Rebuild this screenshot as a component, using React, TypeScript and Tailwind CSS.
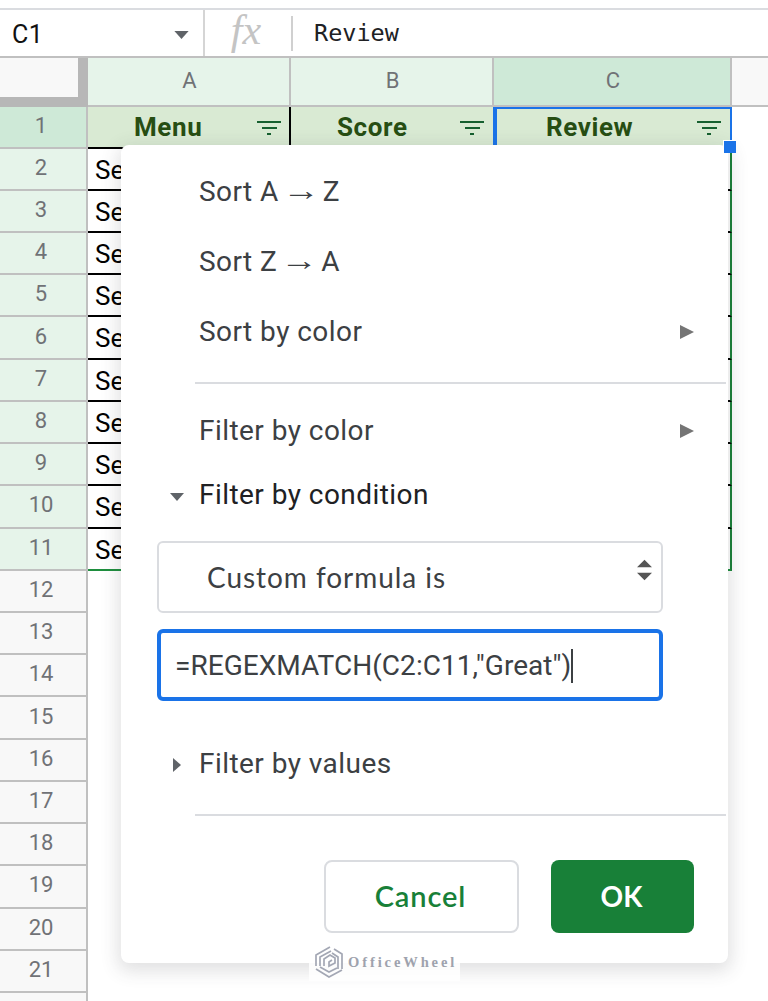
import clsx from "clsx";

const rows = Array.from({ length: 22 }, (_, i) => i + 1);

function FilterIcon() {
  return (
    <svg width="26" height="16" viewBox="0 0 26 16" className="shrink-0" fill="#16602f">
      <rect x="1" y="1" width="24" height="2" />
      <rect x="6" y="7" width="15" height="2" />
      <rect x="11" y="13" width="4" height="2" />
    </svg>
  );
}

function ColumnHeader({ label, className }: { label: string; className: string }) {
  return (
    <div className={clsx("flex items-center justify-center border-r-2 border-[#c0c0c0] pb-[2px] pl-0.5 text-[22px] text-[#707276]", className)}>
      {label}
    </div>
  );
}

function FormulaBar() {
  return (
    <div className="flex h-12 items-center border-t-2 border-[#dadce0]">
      <div className="flex h-full w-[205px] items-center justify-between border-r-2 border-[#d5d5d5] pr-[14px] pl-3 text-[25px] text-[#111]">
        <span className="pt-[3px] tracking-[0.4px]">C1</span>
        <svg width="15" height="8" viewBox="0 0 16 9" fill="#5f6368" className="mt-1"><path d="M0 0h16L8 9z" /></svg>
      </div>
      <div className="flex h-[35px] w-[88px] items-center justify-center border-r-2 border-[#d0d0d0] pr-1 pb-[5px] font-['Liberation_Serif',serif] text-[42px] text-[#c4c4c4] italic">
        fx
      </div>
      <div className="pt-[2px] pl-[21px] font-['DejaVu_Sans_Mono',monospace] text-[23.5px] text-[#202124]">Review</div>
    </div>
  );
}

function Sheet() {
  return (
    <div className="flex">
      <div className="w-[88px] shrink-0">
        <div className="h-[49px] border-r-10 border-b-10 border-[#b7b7b7] bg-[#f8f8f8]" />
        {rows.map((n) => (
          <div
            key={n}
            className={clsx(
              "flex items-center justify-center border-r-2 border-b-2 border-[#c0c0c0] pr-1 pb-[3px] text-[22px] text-[#707276]",
              n === 1 ? "h-[41.6px] bg-[#cee9d7]" : "h-[42.22px]",
              n > 1 && n < 12 && "bg-[#e6f4ea]",
              n > 11 && "bg-[#f8f8f8]",
            )}
          >
            {n < 22 && n}
          </div>
        ))}
      </div>
      <div className="flex-1">
        <div className="flex h-[49px] border-b-2 border-[#c0c0c0]">
          <ColumnHeader label="A" className="w-[203px] bg-[#e6f4ea]" />
          <ColumnHeader label="B" className="w-[203px] bg-[#e6f4ea]" />
          <ColumnHeader label="C" className="w-[238px] bg-[#cee9d7]" />
          <div className="flex-1 bg-[#f8f8f8]" />
        </div>
        <div className="flex h-[41.6px] w-[644px] bg-[#d9ead3] text-[26px] font-bold tracking-[0.6px] text-[#274e13]">
          <div className="flex w-[203px] items-center justify-between border-r-2 border-b-2 border-black pt-[2px] pr-[7px] pl-[46px]">
            Menu <FilterIcon />
          </div>
          <div className="flex w-[202px] items-center justify-between border-b-2 border-black pt-[2px] pr-[8px] pl-[46px]">
            Score <FilterIcon />
          </div>
          <div className="flex w-[239px] items-center justify-between border-2 border-l-4 border-[#1a73e8] pr-[8px] pl-[49px]">
            Review <FilterIcon />
          </div>
        </div>
        {rows.slice(1, 11).map((n) => (
          <div
            key={n}
            className={clsx(
              "h-[42.22px] w-[644px] border-r-2 border-r-[#188038] border-b-2 pl-[7px] text-[26px] leading-[42px] text-black",
              n === 11 ? "border-b-[#1e8e3e]" : "border-b-black",
            )}
          >
            Set Menu
          </div>
        ))}
      </div>
    </div>
  );
}

function Arrow() {
  return <span className="mx-[8px] inline-block -translate-y-px scale-x-[1.35] font-['Liberation_Serif',serif] tracking-normal">→</span>;
}

function MenuItem({ label, className, submenu }: { label: React.ReactNode; className: string; submenu?: boolean }) {
  return (
    <div className={clsx("flex items-center justify-between pr-[34px] pl-[78px] tracking-[0.45px]", className)}>
      <span>{label}</span>
      {submenu && <svg width="14" height="14" viewBox="0 0 14 14" fill="#757575"><path d="M0 0l14 7-14 7z" /></svg>}
    </div>
  );
}

function OfficeWheelMark() {
  return (
    <div className="absolute top-[798px] left-[188px] flex h-[38px] w-[151px] items-center bg-white/85 pl-[6px]">
      <svg width="28" height="32" viewBox="0 0 28 32" fill="none" stroke="#a3a7b4" strokeWidth="1.7">
        <path d="M15 1L1 9v11M5 20v-9L16 5M19 3l8 5v15M23 23V11l-6-4" />
        <path d="M1 23l13 8 13-7M5 21l9 5 8-4M9 20v-7l6-4 5 3v5l-6 3v-4l3-2" />
      </svg>
      <span className="ml-[5px] pt-0.5 font-['Liberation_Serif',serif] text-[14.5px] font-bold tracking-[2.9px] text-[#9ea2ad]">OfficeWheel</span>
    </div>
  );
}

function FilterMenu() {
  return (
    <div className="absolute top-[145px] left-[121px] h-[818px] w-[607px] rounded-lg bg-white pt-3 text-[28px] text-[#3c4043] shadow-[0_5px_18px_3px_rgba(60,64,67,0.16)]">
      <MenuItem label={<>Sort A<Arrow />Z</>} className="h-[70px]" />
      <MenuItem label={<>Sort Z<Arrow />A</>} className="h-[70px]" />
      <MenuItem label="Sort by color" className="h-[70px]" submenu />
      <div className="mt-[15px] mr-[2px] ml-[74px] h-[2px] bg-[#dadce0]" />
      <MenuItem label="Filter by color" className="mt-3 h-[70px]" submenu />
      <div className="flex h-[58px] items-center pl-[49px] tracking-[0.45px] text-[#202124]">
        <svg width="14" height="8" viewBox="0 0 14 8" fill="#5f6368" className="mt-1 mr-[15px]"><path d="M0 0h14L7 8z" /></svg>
        Filter by condition
      </div>
      <div className="mt-[17px] ml-[36px] flex h-[72px] w-[506px] items-center justify-between rounded-md border-2 border-[#dadce0] pr-[9px] pl-[48px] font-['Lato',sans-serif] tracking-[0.95px]">
        Custom formula is
        <svg width="15" height="24" viewBox="0 0 16 24" fill="#555" className="mb-[14px]"><path d="M0 9L8 1l8 8zM0 15h16l-8 8z" /></svg>
      </div>
      <div className="mt-4 ml-[36px] flex h-[72px] w-[506px] items-center rounded-md border-4 border-[#1a73e8] pt-0.5 pl-[14px] tracking-[0.04px]">
        =REGEXMATCH(C2:C11,"Great")
        <span className="h-[34px] w-[2px] bg-[#3c4043]" />
      </div>
      <div className="mt-[28px] flex h-[70px] items-center pl-[52px] tracking-[0.45px]">
        <svg width="8" height="14" viewBox="0 0 8 14" fill="#5f6368" className="mt-0.5 mr-[18px]"><path d="M0 0l8 7-8 7z" /></svg>
        Filter by values
      </div>
      <div className="mt-[15px] mr-[2px] ml-[74px] h-[2px] bg-[#dadce0]" />
      <div className="mt-[44px] mr-[34px] flex justify-end gap-8 font-['Lato',sans-serif]">
        <button className="h-[73px] w-[195px] rounded-lg border-2 border-[#dadce0] pr-0.5 pb-px text-[29px] font-semibold tracking-[0.9px] text-[#188038]">Cancel</button>
        <button className="h-[73px] w-[143px] rounded-lg bg-[#188038] pr-0.5 pb-px font-bold text-white">OK</button>
      </div>
      <OfficeWheelMark />
    </div>
  );
}

export default function App() {
  return (
    <div className="relative h-[1001px] w-[768px] overflow-hidden bg-white pt-2 font-['Roboto',sans-serif]">
      <FormulaBar />
      <div className="border-t-2 border-[#c0c0c0]">
        <Sheet />
      </div>
      <FilterMenu />
      {/* selection handle */}
      <div className="absolute top-[140px] left-[723px] size-[13px] border-t border-l border-white bg-[#1a73e8]" />
    </div>
  );
}
